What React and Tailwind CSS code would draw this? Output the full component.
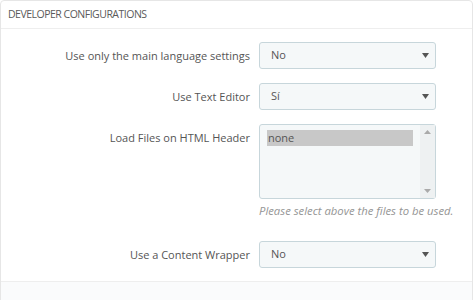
const font = { fontFamily: '"Open Sans", "Liberation Sans", sans-serif' };

function Caret() {
  return (
    <svg width="7" height="5" viewBox="0 0 7 5" className="shrink-0">
      <path d="M0 0 L7 0 L3.5 5 Z" fill="#555" />
    </svg>
  );
}

function SelectBox({ value }) {
  return (
    <div className="w-[177px] h-[27px] flex items-center justify-between pl-[11px] pr-[6px] bg-[#f5f8f9] border border-[#c7d6db] rounded-[3px] text-[11px] text-[#555]">
      <span>{value}</span>
      <Caret />
    </div>
  );
}

function Row({ label, children, className }) {
  return (
    <div className={"flex items-start " + (className || "")}>
      <div className="w-[249px] text-right text-[11px] text-[#555] leading-[27px]">
        {label}
      </div>
      <div className="ml-[9px]">{children}</div>
    </div>
  );
}

export default function App() {
  return (
    <div className="w-[473px] h-[300px] bg-white overflow-hidden" style={font}>
      <div className="border border-[#e6e6e6] rounded-[4px] bg-white">
        <div className="h-[28px] px-[7px] border-b border-[#eee] text-[10.5px] tracking-[-0.5px] text-[#5a5a5a] uppercase flex items-center">
          Developer configurations
        </div>
        <div className="pt-[13px]">
          <Row label="Use only the main language settings">
            <SelectBox value="No" />
          </Row>
          <Row label="Use Text Editor" className="mt-[14px]">
            <SelectBox value="Sí" />
          </Row>
          <Row label="Load Files on HTML Header" className="mt-[14px]">
            <div className="w-[177px] h-[75px] flex bg-[#f5f8f9] border border-[#c7d6db] rounded-[3px] text-[11px] text-[#555]">
              <div className="flex-1 pl-[7px] pt-[5px] pr-[7px]">
                <div className="bg-[#c8c8c8] h-[16px] leading-[16px] px-[1px]">none</div>
              </div>
              <div className="w-[15px] bg-[#eef1f2] flex flex-col items-center justify-between py-[5px]">
                <svg width="7" height="4" viewBox="0 0 7 4"><path d="M0 4 L7 4 L3.5 0 Z" fill="#aaa" /></svg>
                <svg width="7" height="4" viewBox="0 0 7 4"><path d="M0 0 L7 0 L3.5 4 Z" fill="#aaa" /></svg>
              </div>
            </div>
            <p className="mt-[4px] text-[11.3px] italic text-[#959595]">
              Please select above the files to be used.
            </p>
          </Row>
          <Row label="Use a Content Wrapper" className="mt-[21px]">
            <SelectBox value="No" />
          </Row>
        </div>
        <div className="mt-[13px] border-t border-[#eee] bg-[#fafbfc] h-[30px]"></div>
      </div>
    </div>
  );
}
